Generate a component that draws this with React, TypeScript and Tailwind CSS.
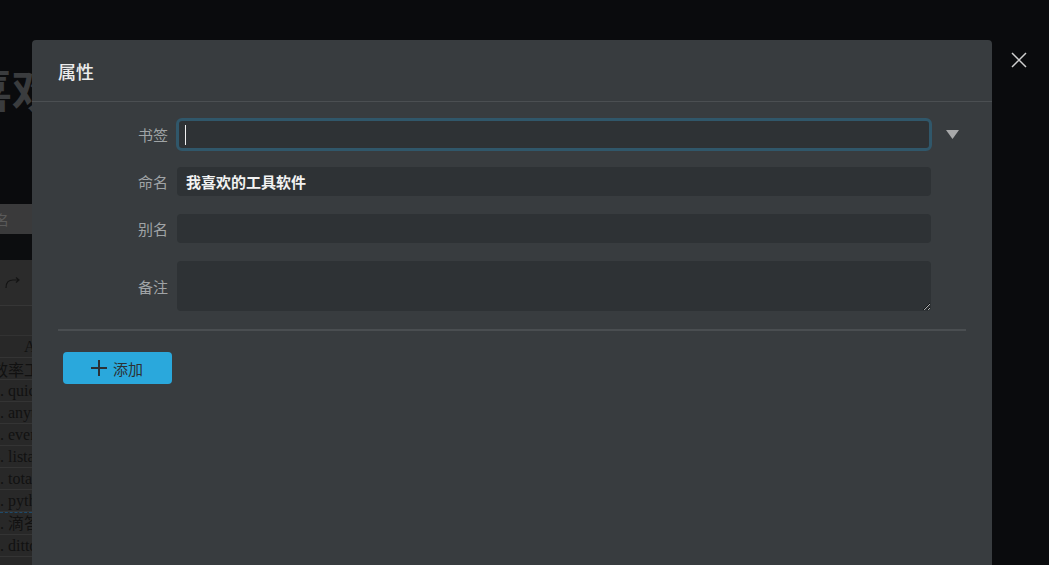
import React from "react";

const rows = [
  { t: "A", ml: "ml-[24px]", font: "serif" },
  { t: "效率工具", ml: "-ml-[8px]", font: "cjk" },
  { t: "1. quicker", ml: "-ml-[8px]", font: "serif" },
  { t: "2. anytxt", ml: "-ml-[8px]", font: "serif" },
  { t: "3. everything", ml: "-ml-[8px]", font: "serif" },
  { t: "4. listary", ml: "-ml-[8px]", font: "serif" },
  { t: "5. totalcmd", ml: "-ml-[8px]", font: "serif" },
  { t: "6. python", ml: "-ml-[8px]", font: "serif" },
];
const rows2 = [
  { t: "7. 滴答清单", ml: "-ml-[8px]" },
  { t: "8. ditto", ml: "-ml-[8px]" },
  { t: "", ml: "" },
];

export default function App() {
  return (
    <div className="relative w-[1049px] h-[565px] overflow-hidden bg-[#0a0b0d] font-['Noto_Sans','Noto_Sans_CJK_SC',sans-serif]">
      {/* dimmed page underneath */}
      <div className="w-[32px] h-full overflow-hidden flex flex-col">
        <div className="h-[56px] shrink-0" />
        <div className="h-[62px] shrink-0 flex items-center whitespace-nowrap overflow-hidden">
          <span className="-ml-[80px] text-[46px] leading-[62px] font-bold text-[#3a3c3e] font-['Noto_Sans_CJK_SC',sans-serif]">
            我喜欢
          </span>
        </div>
        <div className="h-[86px] shrink-0" />
        <div className="h-[30px] shrink-0 bg-[#3a3a3b] flex items-center whitespace-nowrap">
          <span className="-ml-[5px] text-[14px] text-[#5a5a5a] font-['Noto_Sans_CJK_SC',sans-serif]">名</span>
        </div>
        <div className="h-[26px] shrink-0 bg-[#0c0d0f]" />
        <div className="h-[46px] shrink-0 bg-[#2b2b2b] flex items-center border-b border-[#363636]">
          <svg width="16" height="12" viewBox="0 0 16 12" className="ml-[5px]">
            <path d="M1 11 C1 5 4 3 8 3 L14 3 M11 0.5 L14 3 L11 5.5" fill="none" stroke="#141414" strokeWidth="1.2" />
          </svg>
        </div>
        <div className="h-[30px] shrink-0 bg-[#292929] border-b border-[#323232]" />
        <div className="flex flex-col bg-[#282828]">
          {rows.map((r, i) => (
            <div
              key={i}
              className="h-[22px] shrink-0 flex items-center whitespace-nowrap border-b border-[#343434]"
            >
              <span
                className={`${r.ml} text-[16px] leading-[22px] text-[#111] ${
                  r.font === "cjk"
                    ? "font-['Noto_Sans_CJK_SC',sans-serif]"
                    : "font-['Liberation_Serif','Noto_Sans_CJK_SC',serif]"
                }`}
              >
                {r.t}
              </span>
            </div>
          ))}
          <div className="h-px border-t border-dashed border-[#1e4a6a]" />
          {rows2.map((r, i) => (
            <div
              key={i}
              className="h-[22px] shrink-0 flex items-center whitespace-nowrap border-b border-[#343434]"
            >
              <span className={`${r.ml} text-[16px] leading-[22px] text-[#111] font-['Liberation_Serif','Noto_Sans_CJK_SC',serif]`}>
                {r.t}
              </span>
            </div>
          ))}
        </div>
      </div>

      {/* close button */}
      <svg
        width="16"
        height="16"
        viewBox="0 0 16 16"
        className="absolute left-[1011px] top-[52px]"
      >
        <path d="M1 1 L15 15 M15 1 L1 15" stroke="#cfcfcf" strokeWidth="1.5" />
      </svg>

      {/* modal */}
      <div className="absolute left-[32px] top-[40px] w-[960px] h-[540px] rounded-t-[4px] bg-[#383c3f] flex flex-col font-['Noto_Sans_CJK_SC',sans-serif]">
        <div className="h-[62px] shrink-0 border-b border-[#4b4f52] flex items-center pl-[26px] text-[18px] leading-none text-[#ececec] font-medium">
          属性
        </div>

        <div className="flex flex-col pt-[16px]">
          <div className="flex items-center h-[33px]">
            <div className="w-[136px] text-right text-[15px] leading-none text-[#a0a4a6]">书签</div>
            <div className="ml-[8px] w-[756px] h-[33px] rounded-[6px] border-[3px] border-[#30576a] bg-[#2e3235] flex items-center pl-[6px]">
              <span className="w-px h-[20px] bg-[#f0f0f0]" />
            </div>
            <svg width="13" height="9" viewBox="0 0 13 9" className="ml-[14px]">
              <polygon points="0,0 13,0 6.5,9" fill="#a8a9aa" />
            </svg>
          </div>

          <div className="flex items-center h-[29px] mt-[16px]">
            <div className="w-[136px] text-right text-[15px] leading-none text-[#a0a4a6]">命名</div>
            <div className="ml-[9px] w-[754px] h-[29px] rounded-[4px] bg-[#2e3235] flex items-center pl-[9px] text-[15px] leading-none font-bold text-[#f2f2f2]">
              我喜欢的工具软件
            </div>
          </div>

          <div className="flex items-center h-[29px] mt-[18px]">
            <div className="w-[136px] text-right text-[15px] leading-none text-[#a0a4a6]">别名</div>
            <div className="ml-[9px] w-[754px] h-[29px] rounded-[4px] bg-[#2e3235]" />
          </div>

          <div className="flex items-center h-[50px] mt-[18px]">
            <div className="w-[136px] text-right text-[15px] leading-none text-[#a0a4a6]">备注</div>
            <textarea
              defaultValue=""
              className="ml-[9px] w-[754px] h-[50px] rounded-[4px] bg-[#2e3235] outline-none border-0 text-[#f2f2f2]"
            />
          </div>

          <div className="mt-[18px] mx-[26px] h-[2px] bg-[#4a4e51]" />

          <div className="mt-[21px] ml-[31px] w-[109px] h-[32px] rounded-[4px] bg-[#2aa8dc] flex items-center justify-center gap-[6px] pr-px">
            <svg width="16" height="16" viewBox="0 0 16 16">
              <path d="M8 0 L8 16 M0 8 L16 8" stroke="#2b3135" strokeWidth="2" />
            </svg>
            <span className="text-[15px] leading-none text-[#2b3135]">添加</span>
          </div>
        </div>
      </div>
    </div>
  );
}
